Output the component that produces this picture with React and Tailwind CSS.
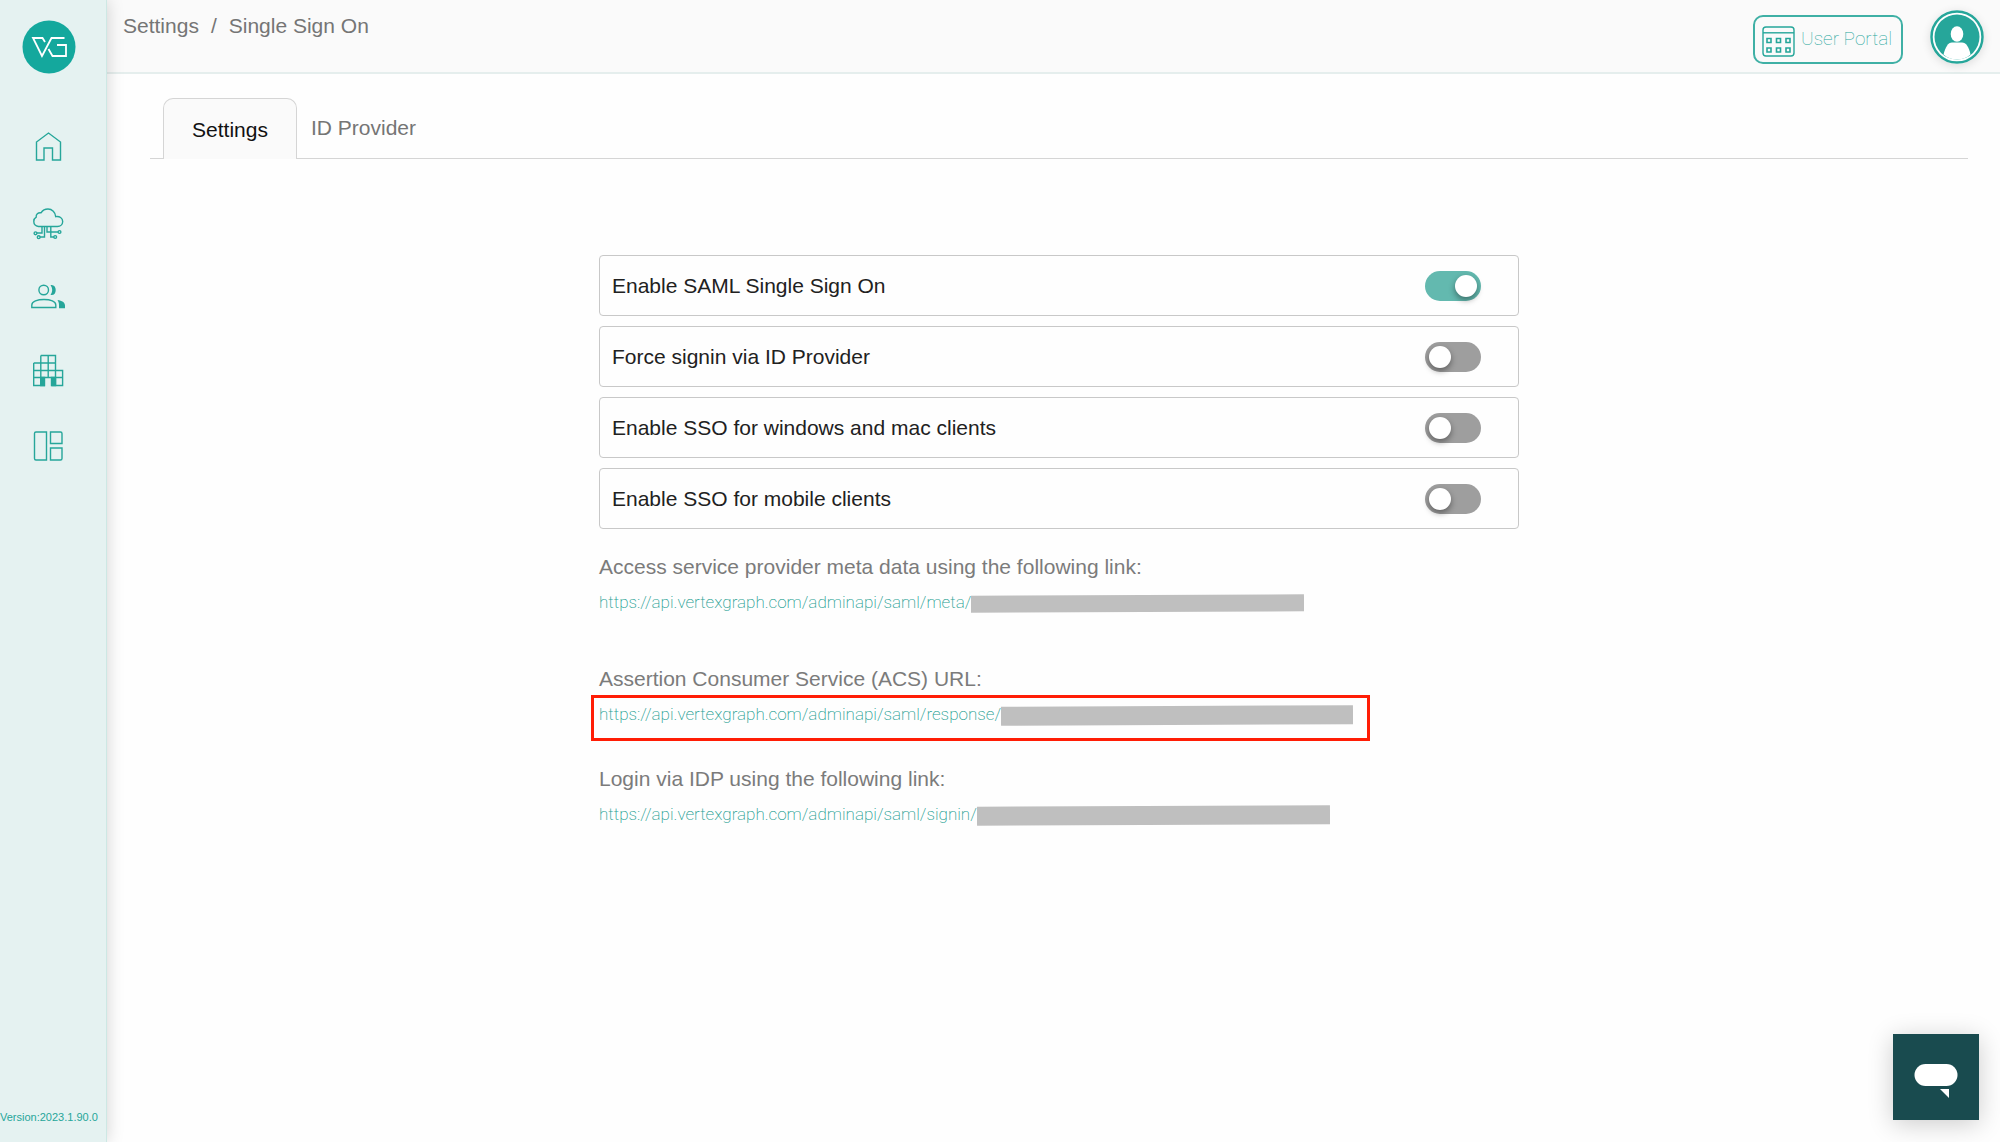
import { useState } from 'react';

const HomeIcon = () => (
  <svg viewBox="0 0 37 37" className="size-[37px]" fill="none" stroke="currentColor" strokeWidth="1.4">
    <path d="M6.5 31V13L18.5 4L30.5 13V31H22.500V19H14V31Z" />
  </svg>
);

const CloudIcon = () => (
  <svg viewBox="0 0 37 37" className="size-[37px]" fill="none" stroke="currentColor" strokeWidth="1.4">
    <path d="M8.500 22.500C5.500 22 3.800 20 3.800 17.500C3.800 15.500 4.800 14 6.200 13.200C5.800 10.500 8 8.300 11 8.800C12.500 6.500 15 5 18 5C22 5 25.500 8.500 25.700 12.600C29.500 12 32.700 14 32.700 17.600C32.700 20.300 30.500 22.500 27.500 22.500Z" />
    <path d="M12 22.500V29H7M14.500 22.500V33H10M17 22.500V28H28M20.800 22.500V33H24" />
    <circle cx="5.500" cy="29.300" r="1.400" />
    <circle cx="8.700" cy="33.200" r="1.400" />
    <circle cx="29.500" cy="28" r="1.400" />
    <circle cx="25.200" cy="33" r="1.400" />
  </svg>
);

const UsersIcon = () => (
  <svg viewBox="0 0 37 37" className="size-[37px]" fill="none" stroke="currentColor" strokeWidth="1.4">
    <circle cx="13.700" cy="11" r="4.800" />
    <path d="M1.800 28.500V26C1.800 22.500 7.500 20.500 14 20.500C20.500 20.500 25.800 22.500 25.800 26V28.500Z" />
    <path stroke="none" fill="currentColor" d="M20.500 6C27.500 4.500 27.500 17.500 20.500 16C22.800 13 22.800 9 20.500 6ZM27.500 21C32 21.500 35 23.500 35 26.500V29.200H29V26.500C29 24 28.500 22.500 27.500 21Z" />
  </svg>
);

const BuildingIcon = () => (
  <svg viewBox="0 0 37 37" className="size-[37px]" fill="none" stroke="currentColor" strokeWidth="1.4">
    <path d="M10.800 1.500H25.500V31.500H32.600V16.500H3.700V31.500H10.800V1.500M18.200 1.500V23.500M3.700 9H25.500M3.700 9V16.500M3.700 23.500H32.600M3.700 31.500H15M21.500 31.500H32.600" />
    <path fill="currentColor" d="M10.800 23.500H14.500V31.500H10.800ZM21.500 23.500H25.500V31.500H21.500Z" />
  </svg>
);

const DashboardIcon = () => (
  <svg viewBox="0 0 37 37" className="size-[37px]" fill="none" stroke="currentColor" strokeWidth="1.4">
    <path d="M16.500 3H6Q4.500 3 4.500 4.500V29.500Q4.500 31 6 31H16.500ZM20.500 3H30.500Q32 3 32 4.500V14.500H20.500ZM20.500 19H32V29.500Q32 31 30.500 31H20.500Z" />
  </svg>
);

const navItems = [
  { name: 'Home', icon: HomeIcon },
  { name: 'Cloud', icon: CloudIcon },
  { name: 'Users', icon: UsersIcon },
  { name: 'Organization', icon: BuildingIcon },
  { name: 'Dashboard', icon: DashboardIcon },
];

const options = [
  { id: 'saml', label: 'Enable SAML Single Sign On' },
  { id: 'force', label: 'Force signin via ID Provider' },
  { id: 'desktop', label: 'Enable SSO for windows and mac clients' },
  { id: 'mobile', label: 'Enable SSO for mobile clients' },
];

function Sidebar() {
  return (
    <aside className="z-10 flex w-[107px] shrink-0 flex-col border-r border-[#cde8e4] bg-[#e5f2f1] text-[#26a69a] shadow-[0_0_16px_rgba(0,0,0,0.18)]">
      <a href="#home" aria-label="VertexGraph" className="mt-5 ml-[22px] block size-[54px]">
        <svg viewBox="0 0 54 54" className="size-[54px]">
          <circle cx="27" cy="27" r="26.500" fill="#14a89d" />
          <path d="M23 22L20.500 18H11L20 36L29.500 18H42.500M26.500 29L30.500 36H44V25H35" fill="none" stroke="#fff" strokeWidth="1.800" />
        </svg>
      </a>
      <nav className="mt-9 flex w-[97px] flex-col">
        {navItems.map(({ name, icon: Icon }) => (
          <a key={name} href={`#${name.toLowerCase()}`} aria-label={name} className="flex h-[75px] items-center justify-center">
            <Icon />
          </a>
        ))}
      </nav>
      <p className="mt-auto pb-[17px] text-[11px] leading-4">Version:2023.1.90.0</p>
    </aside>
  );
}

function Header() {
  return (
    <header className="flex h-[74px] shrink-0 items-start justify-between border-b-2 border-[#e5eeed] bg-[#fafafa] pr-4 pl-4">
      <div className="flex gap-3 pt-3 text-[21px] leading-7 text-[#757575]">
        <a href="#settings">Settings</a>
        <span>/</span>
        <span>Single Sign On</span>
      </div>
      <div className="flex pt-2.5 text-[#26a69a]">
        <button className="mt-[5px] flex h-[49px] w-[150px] items-center gap-1.5 rounded-[10px] border-2 border-[#3fb0a5] pl-[7px] font-['Roboto',sans-serif] text-[19px] font-thin">
          <svg viewBox="0 0 33 31" className="mt-1 h-[31px] w-[33px] shrink-0" fill="none" stroke="currentColor" strokeWidth="1.400">
            <rect x="1" y="1" width="31" height="29" rx="3" />
            <path d="M1 6.800H32" />
            <path strokeWidth="1.600" d="M5 12.500H9V16.500H5ZM14.500 12.500H18.500V16.500H14.500ZM24 12.500H28V16.500H24ZM5 22H9V26H5ZM14.500 22H18.500V26H14.500ZM24 22H28V26H24Z" />
          </svg>
          User Portal
        </button>
        <button aria-label="Account" className="ml-[27px] size-[54px] rounded-full shadow-[0_2px_10px_rgba(0,0,0,0.12)]">
          <svg viewBox="0 0 54 54" className="size-[54px]">
            <circle cx="27" cy="27" r="25.500" fill="#fff" stroke="#26a69a" strokeWidth="2.500" />
            <circle cx="27" cy="27" r="22.500" fill="#26a69a" />
            <ellipse cx="27" cy="24" rx="6.300" ry="7.800" fill="#fff" />
            <path d="M13.500 44.500C15.500 37 18 32.500 22 32.500H32C36 32.500 39 37 40.500 44.500C37 48 32 49.500 27 49.500C22 49.500 17 48 13.500 44.500Z" fill="#fff" />
          </svg>
        </button>
      </div>
    </header>
  );
}

function Tabs() {
  return (
    <div role="tablist" className="flex h-[61px] items-end text-[21px]">
      <span className="w-[13px] border-b border-[#d5d5d5]" />
      <button role="tab" aria-selected="true" className="h-[61px] w-[134px] rounded-t-[10px] border border-b-0 border-[#d5d5d5] bg-[#fafafa] pt-0.5 text-[#111]">
        Settings
      </button>
      <div className="flex h-[61px] flex-1 border-b border-[#d5d5d5]">
        <button role="tab" aria-selected="false" className="px-3.5 text-[#757575]">ID Provider</button>
      </div>
    </div>
  );
}

function LinkBlock({ label, url, bar }) {
  return (
    <div>
      <p className="leading-7 text-[#7b7b7b]">{label}</p>
      <div className="mt-2 flex h-7 items-center">
        <a href={url} className="font-['Roboto',sans-serif] text-[17px] font-extralight whitespace-nowrap text-[#1fa093]">{url}</a>
        <span className={`-rotate-[0.25deg] bg-[#bfbfbf] ${bar}`} />
      </div>
    </div>
  );
}

export default function App() {
  const [enabled, setEnabled] = useState({ saml: true });

  return (
    <div className="flex min-h-screen bg-[#fefefe] font-['Liberation_Sans',Arial,sans-serif]">
      <Sidebar />
      <div className="flex min-w-0 flex-1 flex-col">
        <Header />
        <main className="pt-6 pr-8 pl-[43px]">
          <Tabs />
          <section className="mx-auto mt-24 max-w-[920px] text-[21px]">
            <div className="flex flex-col gap-2.5">
              {options.map((opt) => (
                <label key={opt.id} className="flex h-[61px] items-center justify-between rounded-[4px] border border-[#c8c8c8] pr-[37px] pl-3 text-[#212121]">
                  {opt.label}
                  <input
                    type="checkbox"
                    checked={!!enabled[opt.id]}
                    onChange={(e) => setEnabled({ ...enabled, [opt.id]: e.target.checked })}
                    className="flex h-[30px] w-14 appearance-none items-center rounded-full bg-[#9e9e9e] px-1 before:size-[22px] before:rounded-full before:bg-white before:shadow-[0_3px_6px_rgba(0,0,0,0.4)] checked:justify-end checked:bg-[#63b9af]"
                  />
                </label>
              ))}
            </div>
            <div className="mt-6">
              <LinkBlock label="Access service provider meta data using the following link:" url="https://api.vertexgraph.com/adminapi/saml/meta/" bar="h-[17px] w-[333px]" />
            </div>
            <div className="relative mt-12">
              <LinkBlock label="Assertion Consumer Service (ACS) URL:" url="https://api.vertexgraph.com/adminapi/saml/response/" bar="h-[19px] w-[352px]" />
              <span className="absolute top-[30px] -left-2 h-[46px] w-[779px] border-[3px] border-[#ff1d05]" />
            </div>
            <div className="mt-9">
              <LinkBlock label="Login via IDP using the following link:" url="https://api.vertexgraph.com/adminapi/saml/signin/" bar="h-[19px] w-[353px]" />
            </div>
          </section>
        </main>
      </div>
      <button aria-label="Open chat" className="fixed right-[21px] bottom-[22px] size-[86px] bg-[#194b4f] shadow-[0_4px_24px_rgba(0,0,0,0.2)]">
        <svg viewBox="0 0 86 86" className="size-[86px]" fill="#fff">
          <rect x="21.500" y="30" width="43" height="22" rx="11" />
          <path d="M47 55H56V64Z" />
        </svg>
      </button>
    </div>
  );
}
